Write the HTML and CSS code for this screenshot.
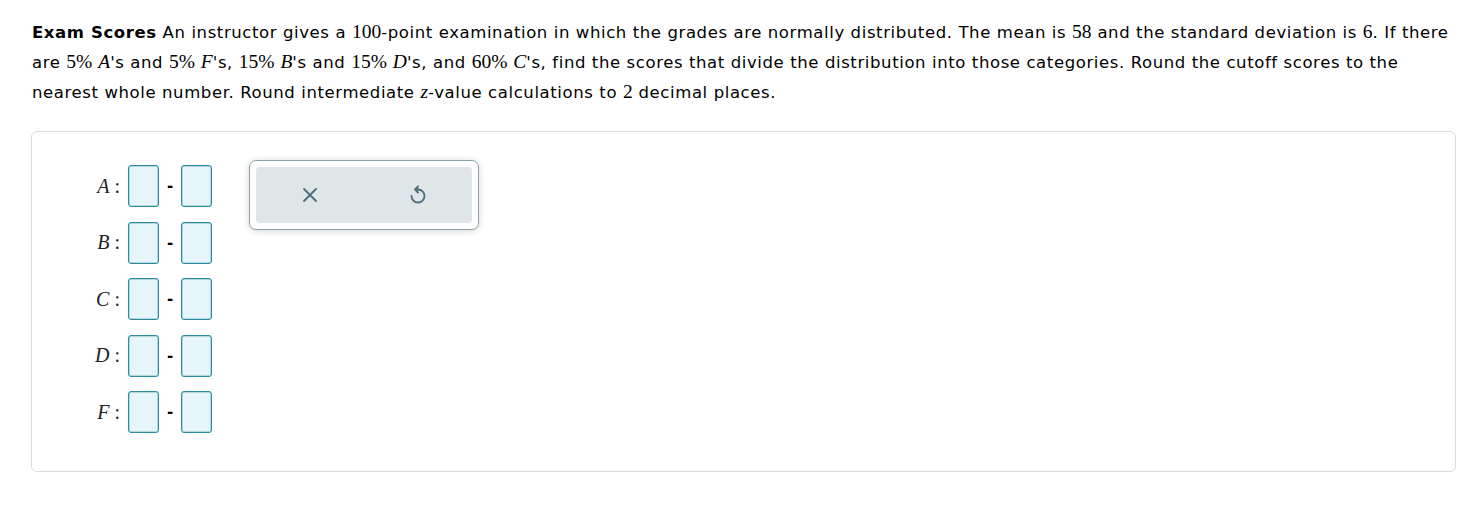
FILE: index.html
```html
<!DOCTYPE html>
<html>
<head>
<meta charset="utf-8">
<link rel="stylesheet" href="styles.css">
</head>
<body>
<div class="page">
  <p class="question"><b>Exam Scores</b> An instructor gives a <span class="m">100</span>-point examination in which the grades are normally distributed. The mean is <span class="m">58</span> and the standard deviation is <span class="m">6</span>. If there are <span class="m">5%</span> <span class="m"><i>A</i></span>'s and <span class="m">5%</span> <span class="m"><i>F</i></span>'s, <span class="m">15%</span> <span class="m"><i>B</i></span>'s and <span class="m">15%</span> <span class="m"><i>D</i></span>'s, and <span class="m">60%</span> <span class="m"><i>C</i></span>'s, find the scores that divide the distribution into those categories. Round the cutoff scores to the nearest whole number. Round intermediate <span class="m"><i>z</i></span>-value calculations to <span class="m">2</span> decimal places.</p>

  <div class="card">
    <div class="rows">
      <div class="row"><span class="label"><i>A</i><span class="colon">:</span></span><span class="box"></span><span class="dash">-</span><span class="box"></span></div>
      <div class="row"><span class="label"><i>B</i><span class="colon">:</span></span><span class="box"></span><span class="dash">-</span><span class="box"></span></div>
      <div class="row"><span class="label"><i>C</i><span class="colon">:</span></span><span class="box"></span><span class="dash">-</span><span class="box"></span></div>
      <div class="row"><span class="label"><i>D</i><span class="colon">:</span></span><span class="box"></span><span class="dash">-</span><span class="box"></span></div>
      <div class="row"><span class="label"><i>F</i><span class="colon">:</span></span><span class="box"></span><span class="dash">-</span><span class="box"></span></div>
    </div>
    <div class="panel">
      <div class="panel-inner">
        <button class="btn" aria-label="clear">
          <svg width="16" height="16" viewBox="0 0 16 16"><path d="M2 2L14 14M14 2L2 14" stroke="#4d6d78" stroke-width="1.8" fill="none" stroke-linecap="round"/></svg>
        </button>
        <button class="btn" aria-label="reset">
          <svg width="18" height="20" viewBox="0 0 18 20"><path d="M9 4.5A6.5 6.5 0 1 1 2.5 11" stroke="#4d6d78" stroke-width="1.8" fill="none" stroke-linecap="round"/><path d="M6 4.5H9M6 4.5L9 1.5M6 4.5L9 7.5" stroke="#4d6d78" stroke-width="1.8" fill="none" stroke-linecap="round" stroke-linejoin="round"/></svg>
        </button>
      </div>
    </div>
  </div>
</div>
</body>
</html>
```

FILE: styles.css
```css
html, body {
  margin: 0;
  padding: 0;
  background: #ffffff;
}
.page {
  padding: 18px 17px 0 31px;
  font-family: "DejaVu Sans", Verdana, sans-serif;
  font-size: 16px;
  color: #000000;
}
.question {
  margin: 0 0 23px 1px;
  line-height: 30px;
  font-size: 16.5px;
  letter-spacing: 0.6px;
}
.question b {
  font-weight: bold;
}
.m {
  font-family: "Liberation Serif", "Times New Roman", serif;
  font-size: 19.5px;
  line-height: 20px;
  letter-spacing: 0;
}
.m i {
  font-style: italic;
}
.card {
  display: flex;
  align-items: flex-start;
  height: 311px;
  border: 1px solid #d4dde0;
  border-radius: 6px;
  padding-top: 28px;
  box-sizing: content-box;
}
.rows {
  display: flex;
  flex-direction: column;
  gap: 14.5px;
  margin-top: 5px;
}
.row {
  display: flex;
  align-items: center;
  height: 42px;
}
.label {
  width: 88px;
  padding-right: 8px;
  text-align: right;
  font-family: "Liberation Serif", "Times New Roman", serif;
  font-size: 20px;
  color: #222;
}
.colon {
  font-style: normal;
  margin-left: 5px;
}
.box {
  width: 29px;
  height: 40px;
  border: 1px solid #2c8c9c;
  border-radius: 3px;
  background: #e6f5f9;
  box-shadow: inset 0 0 0 0.5px #7fbac4;
}
.dash {
  width: 22px;
  text-align: center;
  font-family: "DejaVu Sans", Verdana, sans-serif;
  font-size: 15px;
  font-weight: bold;
}
.panel {
  margin-left: 37px;
  width: 216px;
  height: 56px;
  padding: 6px;
  border: 1px solid #8da3a9;
  border-radius: 7px;
  background: #ffffff;
  box-shadow: 0 1px 6px rgba(0, 0, 0, 0.18);
}
.panel-inner {
  display: flex;
  height: 100%;
  background: #dfe6e8;
  border-radius: 4px;
}
.btn {
  flex: 1;
  display: flex;
  align-items: center;
  justify-content: center;
  border: none;
  background: transparent;
  padding: 0;
  margin: 0;
}
.btn svg {
  display: block;
}
```
